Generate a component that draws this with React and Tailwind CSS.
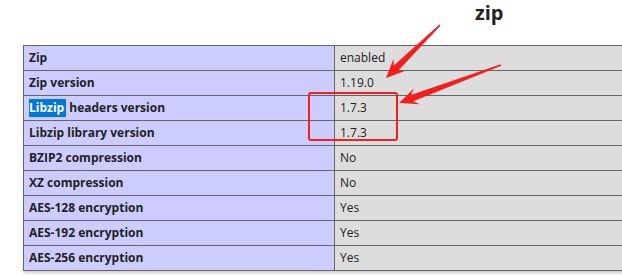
import React from "react";

// zip extension block from phpinfo(), with the red markup drawn over it
const rows = [
  ["Zip", "enabled"],
  ["Zip version", "1.19.0"],
  ["Libzip headers version", "1.7.3"],
  ["Libzip library version", "1.7.3"],
  ["BZIP2 compression", "No"],
  ["XZ compression", "No"],
  ["AES-128 encryption", "Yes"],
  ["AES-192 encryption", "Yes"],
  ["AES-256 encryption", "Yes"],
];

// tapered arrow: thin tail, notched head at the tip
function arrowPoints([tx, ty], [px, py]) {
  const dx = px - tx;
  const dy = py - ty;
  const len = Math.hypot(dx, dy);
  const ux = dx / len;
  const uy = dy / len;
  const nx = -uy;
  const ny = ux;
  const at = (d, w) => [px - ux * d + nx * w, py - uy * d + ny * w];
  const pts = [
    [tx + nx * 0.8, ty + ny * 0.8],
    at(14, 3.4),
    at(19, 8.5),
    [px, py],
    at(19, -8.5),
    at(14, -3.4),
    [tx - nx * 0.8, ty - ny * 0.8],
  ];
  return pts.map((p) => p.map((v) => v.toFixed(1)).join(",")).join(" ");
}

function Markup() {
  return (
    <svg className="absolute inset-0 pointer-events-none" width="622" height="277">
      <polygon points={arrowPoints([440, 25], [386, 78])} fill="#f41f1c" />
      <polygon points={arrowPoints([501, 65], [399, 103])} fill="#f41f1c" />
      <rect x="309" y="93" width="88" height="47" rx="2" fill="none" stroke="#f41f1c" strokeWidth="2" />
    </svg>
  );
}

export default function App() {
  return (
    <div
      className="relative w-[622px] h-[277px] overflow-hidden bg-white text-[#222]"
      style={{ fontFamily: '"Open Sans", "Noto Sans", sans-serif' }}
    >
      <h2 className="ml-[475px] pt-[1px] text-[20px] leading-[24px] font-bold">zip</h2>

      <table className="mt-[20px] ml-[23px] w-[660px] border-collapse shadow-[1px_2px_3px_#ccc] text-[12px]">
        <tbody>
          {rows.map(([label, value], i) => (
            <tr key={i}>
              <td className="w-[311px] p-0 border border-[#666] bg-[#ccccff] font-bold">
                <div className="h-[24px] px-[5px] flex items-center whitespace-nowrap">
                  {label.startsWith("Libzip headers") ? (
                    <>
                      <span className="bg-[#0078d7] text-white pr-[2px]">Libzip</span>
                      &nbsp;headers version
                    </>
                  ) : (
                    label
                  )}
                </div>
              </td>
              <td className="p-0 border border-[#666] bg-[#dddddd]">
                <div className="h-[24px] px-[5px] flex items-center">{value}</div>
              </td>
            </tr>
          ))}
        </tbody>
      </table>

      <Markup />
    </div>
  );
}
